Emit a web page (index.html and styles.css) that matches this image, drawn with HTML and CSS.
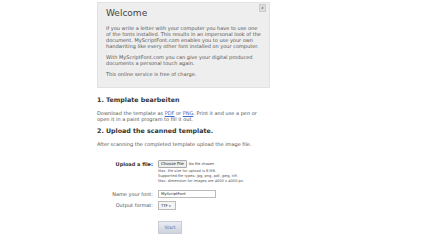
FILE: index.html
```html
<!DOCTYPE html>
<html>
<head>
<meta charset="utf-8">
<link rel="stylesheet" href="styles.css">
</head>
<body>
<div class="page">
  <div class="welcome">
    <span class="close">x</span>
    <h1 class="welcome-title">Welcome</h1>
    <p>If you write a letter with your computer you have to use one of the fonts installed. This results in an impersonal look of the document. MyScriptFont.com enables you to use your own handwriting like every other font installed on your computer.</p>
    <p>With MyScriptFont.com you can give your digital produced documents a personal touch again.</p>
    <p>This online service is free of charge.</p>
  </div>
  <h2 class="step first">1. Template bearbeiten</h2>
  <p class="text">Download the template as <a href="#">PDF</a> or <a href="#">PNG</a>. Print it and use a pen or open it in a paint program to fill it out.</p>
  <h2 class="step">2. Upload the scanned template.</h2>
  <p class="text">After scanning the completed template upload the image file.</p>
  <div class="form">
    <div class="label strong">Upload a file:</div>
    <div class="field">
      <div class="file"><span class="file-btn">Choose File</span><span class="file-none">No file chosen</span></div>
      <div class="hint">Max. file size for upload is 6 MB.<br>Supported file types: jpg, png, pdf, jpeg, tiff.<br>Max. dimension for images are 4000 x 4000 px.</div>
    </div>
    <div class="label">Name your font:</div>
    <div class="field"><span class="input">MyScriptFont</span></div>
    <div class="label">Output format:</div>
    <div class="field"><span class="select">TTF <span class="arrow">▾</span></span></div>
    <div class="label"></div>
    <div class="field"><span class="start">Start</span></div>
  </div>
</div>
</body>
</html>
```
FILE: styles.css
```css
html, body {
  margin: 0;
  padding: 0;
  background: #ffffff;
}
body {
  font-family: "DejaVu Sans", Verdana, sans-serif;
  color: #555555;
  font-size: 5px;
}
.page {
  width: 173px;
  margin-left: 97px;
  padding-top: 2px;
}
.welcome {
  position: relative;
  background: #eeeeee;
  border: 1px solid #e2e2e2;
  padding: 5px 8px 9px 8px;
  box-sizing: border-box;
  height: 86px;
}
.close {
  position: absolute;
  right: 3px;
  top: 1px;
  width: 5px;
  height: 6px;
  background: #dddddd;
  border: 1px solid #cccccc;
  font-size: 4px;
  line-height: 6px;
  text-align: center;
  color: #555;
}
.welcome-title {
  font-size: 9px;
  font-weight: normal;
  color: #444444;
  margin: 0 0 6px 0;
  line-height: 11px;
}
.welcome p {
  margin: 0 0 5px 0;
  line-height: 6px;
  font-size: 5px;
}
.step {
  font-size: 6.3px;
  font-weight: bold;
  color: #333333;
  margin: 5px 0 6px 0;
  line-height: 8px;
}
.step.first {
  margin-top: 8px;
}
.text {
  margin: 0;
  line-height: 6px;
}
.text a {
  color: #3a6fd0;
  text-decoration: underline;
}
.form {
  display: grid;
  grid-template-columns: 56px auto;
  column-gap: 5px;
  row-gap: 3px;
  margin-top: 12px;
  align-items: start;
}
.label {
  text-align: right;
  font-size: 5px;
  line-height: 8px;
}
.label.strong {
  font-weight: bold;
  color: #333;
  font-size: 5px;
  margin-top: 1px;
}
.file {
  display: flex;
  align-items: center;
  gap: 2px;
  height: 9px;
}
.file-btn {
  font-size: 4px;
  border: 1px solid #aaaaaa;
  border-radius: 1px;
  background: #efefef;
  padding: 0 2px;
  line-height: 6px;
  color: #222;
}
.file-none {
  font-size: 3.6px;
  color: #444;
}
.hint {
  font-size: 3.6px;
  line-height: 5px;
  color: #555;
  margin-top: 1px;
  margin-bottom: 3px;
}
.input {
  display: block;
  width: 54px;
  height: 6px;
  border: 1px solid #bbbbbb;
  background: #fff;
  font-size: 3.8px;
  line-height: 6px;
  padding-left: 2px;
  color: #222;
}
.select {
  display: inline-block;
  width: 14px;
  height: 7px;
  border: 1px solid #bbbbbb;
  background: #f4f4f4;
  font-size: 3.8px;
  line-height: 7px;
  padding-left: 2px;
  color: #222;
}
.arrow {
  font-size: 3px;
}
.start {
  display: inline-block;
  margin-top: 8px;
  width: 24px;
  height: 13px;
  box-sizing: border-box;
  border: 1px solid #c8ccd4;
  background: linear-gradient(#e9edf3, #cdd3dc);
  color: #4a6db0;
  font-size: 4.5px;
  line-height: 11px;
  text-align: center;
}
```
